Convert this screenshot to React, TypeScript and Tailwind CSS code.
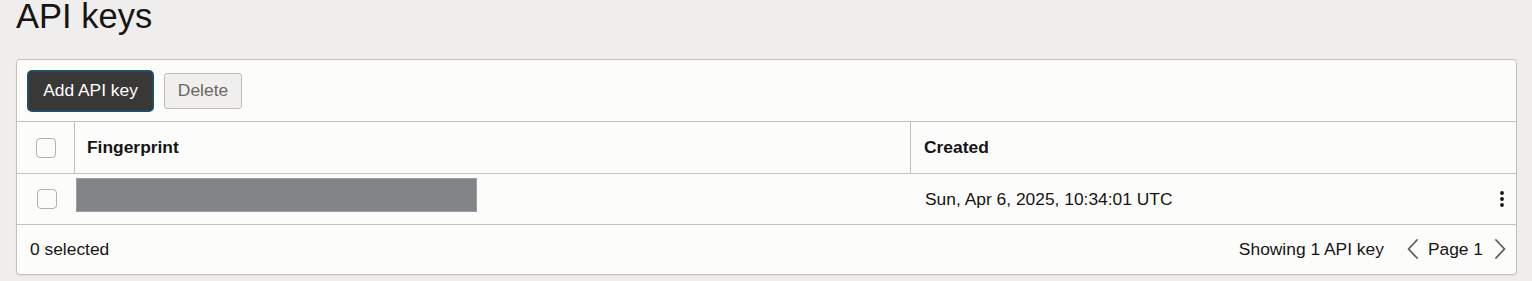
import React from "react";

function Checkbox() {
  return <div className="w-[20px] h-[20px] rounded-[4px] border border-[#b3b0ac] bg-[#fcfcfb]" />;
}

function ChevronLeft() {
  return (
    <svg width="13" height="22" viewBox="0 0 13 22" fill="none">
      <path d="M11 2 L2.5 11 L11 20" stroke="#5f5d5a" strokeWidth="1.8" strokeLinecap="round" strokeLinejoin="round" />
    </svg>
  );
}

function ChevronRight() {
  return (
    <svg width="13" height="22" viewBox="0 0 13 22" fill="none">
      <path d="M2 2 L10.5 11 L2 20" stroke="#5f5d5a" strokeWidth="1.8" strokeLinecap="round" strokeLinejoin="round" />
    </svg>
  );
}

function Kebab() {
  return (
    <svg width="6" height="18" viewBox="0 0 6 18">
      <circle cx="3" cy="3" r="1.9" fill="#161513" />
      <circle cx="3" cy="9" r="1.9" fill="#161513" />
      <circle cx="3" cy="15" r="1.9" fill="#161513" />
    </svg>
  );
}

export default function App() {
  return (
    <div
      className="w-[1532px] h-[281px] bg-[#efeeec] text-[#161513] overflow-hidden"
      style={{ fontFamily: '"Liberation Sans", Arial, sans-serif' }}
    >
      <h1 className="pl-[16px] text-[34.5px] leading-[34px] -mt-[1px] font-normal text-[#161513]">API keys</h1>
      <div className="ml-[16px] mt-[26px] w-[1501px] border border-[#c4c1bd] rounded-[4px] bg-[#fcfcfb] shadow-[0_1px_2px_rgba(0,0,0,0.06)]">
        <div className="h-[61px] flex items-center gap-[10px] pl-[10px]">
          <button className="h-[42px] w-[127px] rounded-[5px] border-2 border-[#1f4f63] bg-[#3a3836] text-white text-[17.4px]">
            Add API key
          </button>
          <button className="h-[36px] w-[78px] rounded-[3px] border border-[#c2bfbb] bg-[#f1efed] text-[#6a6865] text-[17.4px]">
            Delete
          </button>
        </div>
        <div className="flex h-[53px] border-t border-b border-[#c4c1bd] items-stretch">
          <div className="w-[58px] flex items-center justify-center border-r border-[#c4c1bd] pl-[1px]">
            <Checkbox />
          </div>
          <div className="w-[836px] flex items-center pl-[12px] border-r border-[#c4c1bd] font-bold text-[17.4px]">
            Fingerprint
          </div>
          <div className="flex-1 flex items-center pl-[13px] font-bold text-[17.4px]">Created</div>
        </div>
        <div className="flex h-[51px] border-b border-[#c4c1bd] items-stretch">
          <div className="w-[58px] flex items-center justify-center pl-[1px]">
            <Checkbox />
          </div>
          <div className="w-[837px] flex items-start pl-[1px] pt-[4px]">
            <div className="w-[401px] h-[34px] bg-[#838488] border border-[#9d9ea1]" />
          </div>
          <div className="flex-1 flex items-center pl-[13px] text-[17.4px]">Sun, Apr 6, 2025, 10:34:01 UTC</div>
          <div className="w-[28px] flex items-center justify-center">
            <Kebab />
          </div>
        </div>
        <div className="flex h-[49px] items-center pl-[13px] pr-[9px] text-[17.4px]">
          <span>0 selected</span>
          <div className="ml-auto flex items-center">
            <span>Showing 1 API key</span>
            <span className="ml-[22px]">
              <ChevronLeft />
            </span>
            <span className="ml-[9px]">Page 1</span>
            <span className="ml-[11px]">
              <ChevronRight />
            </span>
          </div>
        </div>
      </div>
    </div>
  );
}
